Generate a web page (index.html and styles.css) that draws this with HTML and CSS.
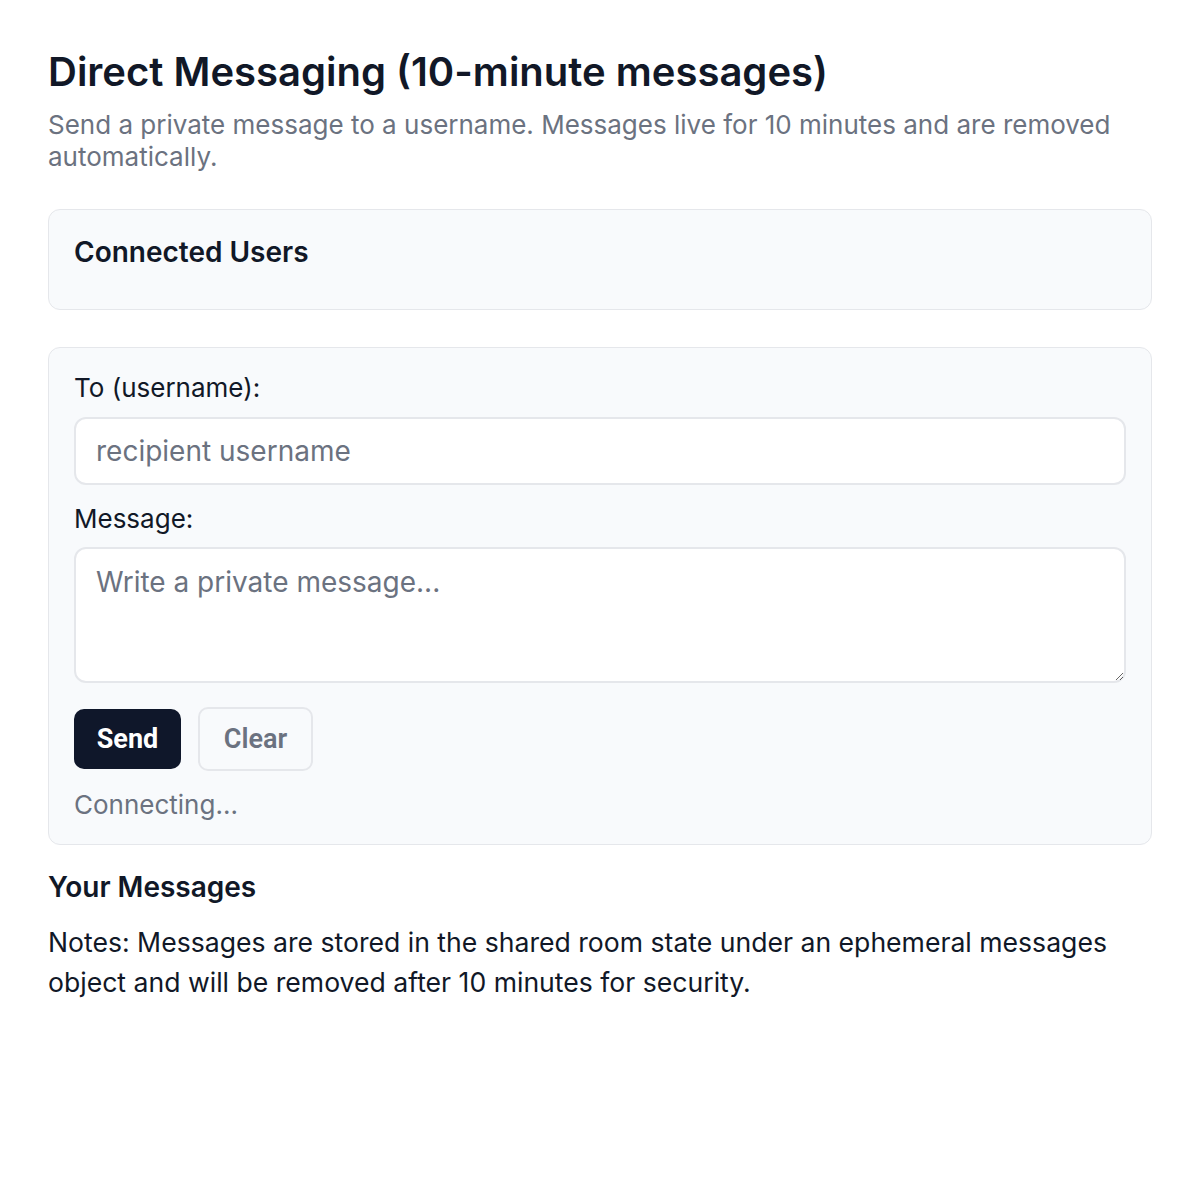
FILE: index.html
```html
<!DOCTYPE html>
<html>
<head>
<meta charset="utf-8">
<link rel="stylesheet" href="styles.css">
</head>
<body>
<div class="page">
  <h1 class="title">Direct Messaging (10-minute messages)</h1>
  <p class="subtitle">Send a private message to a username. Messages live for 10 minutes and are removed automatically.</p>

  <section class="card users">
    <h3 class="card-title">Connected Users</h3>
  </section>

  <section class="card compose">
    <label class="label">To (username):</label>
    <input class="field" type="text" placeholder="recipient username">
    <label class="label second">Message:</label>
    <textarea class="field area" placeholder="Write a private message..."></textarea>
    <div class="actions">
      <button class="btn primary">Send</button>
      <button class="btn secondary">Clear</button>
    </div>
    <div class="status">Connecting...</div>
  </section>

  <h3 class="section-title">Your Messages</h3>
  <p class="notes">Notes: Messages are stored in the shared room state under an ephemeral messages object and will be removed after 10 minutes for security.</p>
</div>
</body>
</html>
```
FILE: styles.css
```css
* { box-sizing: border-box; }
body {
  margin: 0;
  background: #ffffff;
  font-family: Inter, "Noto Sans", sans-serif;
  color: #111827;
}
.page {
  padding: 48px 48px;
}
.title {
  margin: 0;
  font-size: 40px;
  font-weight: 600;
  line-height: 48px;
  color: #111827;
}
.subtitle {
  margin: 13px 0 0;
  font-size: 26px;
  line-height: 32px;
  color: #6b7280;
}
.card {
  background: #f8fafc;
  border: 1px solid #e5e7eb;
  border-radius: 12px;
  padding: 24px 25px;
}
.users {
  margin-top: 36px;
  height: 101px;
  padding-top: 25px;
}
.card-title {
  margin: 0;
  font-size: 28px;
  font-weight: 600;
  line-height: 34px;
}
.compose {
  margin-top: 37px;
  display: flex;
  flex-direction: column;
  padding-bottom: 23px;
}
.label {
  font-size: 26px;
  line-height: 32px;
  color: #111827;
  margin-bottom: 13px;
}
.label.second {
  margin-bottom: 12px;
}
.field {
  display: block;
  width: 100%;
  height: 68px;
  border: 2px solid #e5e7eb;
  border-radius: 12px;
  background: #ffffff;
  padding: 0 20px;
  font-family: Inter, "Noto Sans", sans-serif;
  font-size: 28px;
  color: #111827;
  margin-bottom: 18px;
  outline: none;
}
.field::placeholder { color: #6b7280; }
.area {
  height: 136px;
  padding: 16px 20px;
  resize: vertical;
  margin-bottom: 24px;
}
.actions {
  display: flex;
  align-items: center;
  gap: 17px;
  height: 64px;
}
.btn {
  font-family: Roboto, sans-serif;
  font-size: 27px;
  font-weight: 700;
  border-radius: 10px;
  cursor: pointer;
}
.primary {
  height: 60px;
  width: 107px;
  padding: 0;
  background: #0f172a;
  color: #ffffff;
  border: none;
}
.secondary {
  height: 64px;
  width: 115px;
  padding: 0;
  background: #f8fafc;
  color: #6b7280;
  border: 2px solid #e5e7eb;
  font-weight: 600;
}
.status {
  margin-top: 18px;
  font-size: 26px;
  line-height: 32px;
  color: #6b7280;
}
.section-title {
  margin: 25px 0 0;
  font-size: 28px;
  font-weight: 600;
  line-height: 34px;
}
.notes {
  margin: 18px 0 0;
  font-size: 26.6px;
  line-height: 40px;
  color: #111827;
}
```
